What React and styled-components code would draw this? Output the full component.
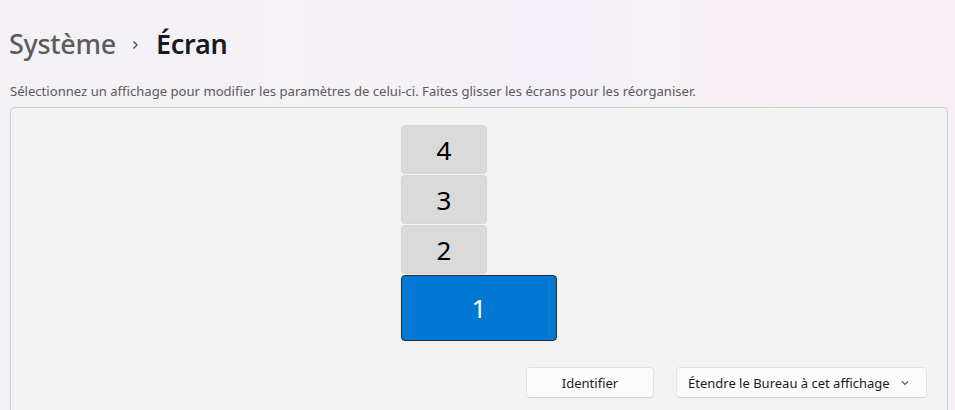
import React from 'react'
import styled, { createGlobalStyle } from 'styled-components'

const GlobalStyle = createGlobalStyle`
  html, body {
    margin: 0;
    padding: 0;
    height: 100%;
  }
  body {
    font-family: "Noto Sans", "Open Sans", sans-serif;
    background: linear-gradient(90deg, #f3f1f6 0%, #f5f0f7 60%, #f8eef6 100%);
    overflow: hidden;
  }
`

const Page = styled.div`
  width: 955px;
  height: 410px;
  box-sizing: border-box;
  padding: 24px 7px 0 10px;
  display: flex;
  flex-direction: column;
`

const Breadcrumb = styled.h1`
  margin: 0 0 0 -1px;
  display: flex;
  align-items: center;
  gap: 14px;
  font-size: 27px;
  font-weight: 600;
  line-height: 40px;
  letter-spacing: -0.3px;
`

const Crumb = styled.span`
  color: ${p => (p.$current ? '#1b1b1b' : '#5c5c5c')};
  font-weight: ${p => (p.$current ? 600 : 500)};
  margin-left: ${p => (p.$current ? '2px' : '0')};
`

const Chevron = styled.svg`
  width: 10px;
  height: 10px;
  fill: none;
  stroke: #5c5c5c;
  stroke-width: 1.5;
  margin-top: 2px;
`

const Description = styled.p`
  margin: 19px 0 0;
  font-size: 13.1px;
  line-height: 16px;
  color: #5a5a5a;
`

const Panel = styled.section`
  margin-top: 8px;
  flex: 1;
  background: #f2f2f2;
  border: 1px solid #cfcfcf;
  border-bottom: none;
  border-radius: 5px 5px 0 0;
  padding: 17px 20px 0 20px;
  display: flex;
  flex-direction: column;
`

const Arrangement = styled.div`
  align-self: center;
  width: 156px;
  display: flex;
  flex-direction: column;
  align-items: flex-start;
  gap: 1px;
`

const Monitor = styled.div`
  box-sizing: border-box;
  width: ${p => (p.$primary ? '156px' : '86px')};
  height: ${p => (p.$primary ? '66px' : '49px')};
  border-radius: 4px;
  background: ${p => (p.$primary ? '#0078d4' : '#dadada')};
  border: 1px solid ${p => (p.$primary ? '#2b2b2b' : '#d6d6d6')};
  color: ${p => (p.$primary ? '#ffffff' : '#000000')};
  display: flex;
  align-items: center;
  justify-content: center;
  font-size: 26px;
  font-weight: 400;
`

const Actions = styled.div`
  margin-top: 26px;
  display: flex;
  justify-content: flex-end;
  gap: 22px;
`

const Button = styled.button`
  box-sizing: border-box;
  height: 31px;
  width: ${p => p.$width}px;
  background: #fbfbfb;
  border: 1px solid #e3e3e3;
  border-bottom-color: #d4d4d4;
  border-radius: 4px;
  font-family: inherit;
  font-size: 13px;
  color: #1b1b1b;
  display: flex;
  align-items: center;
  justify-content: ${p => (p.$dropdown ? 'space-between' : 'center')};
  padding: 0 ${p => (p.$dropdown ? '16px 0 11px' : '0')};
`

const Caret = styled.svg`
  width: 10px;
  height: 10px;
  fill: none;
  stroke: #5c5c5c;
  stroke-width: 1.2;
`

export default function App() {
  return (
    <>
      <GlobalStyle />
      <Page>
        <Breadcrumb>
          <Crumb>Système</Crumb>
          <Chevron viewBox="0 0 10 10">
            <path d="M3.5 1.5 L7 5 L3.5 8.5" />
          </Chevron>
          <Crumb $current>Écran</Crumb>
        </Breadcrumb>
        <Description>
          Sélectionnez un affichage pour modifier les paramètres de celui-ci. Faites glisser les écrans pour les réorganiser.
        </Description>
        <Panel>
          <Arrangement>
            {['4', '3', '2'].map(n => (
              <Monitor key={n}>{n}</Monitor>
            ))}
            <Monitor $primary>1</Monitor>
          </Arrangement>
          <Actions>
            <Button $width={128}>Identifier</Button>
            <Button $width={251} $dropdown>
              Étendre le Bureau à cet affichage
              <Caret viewBox="0 0 10 10">
                <path d="M2 3.5 L5 6.5 L8 3.5" />
              </Caret>
            </Button>
          </Actions>
        </Panel>
      </Page>
    </>
  )
}
